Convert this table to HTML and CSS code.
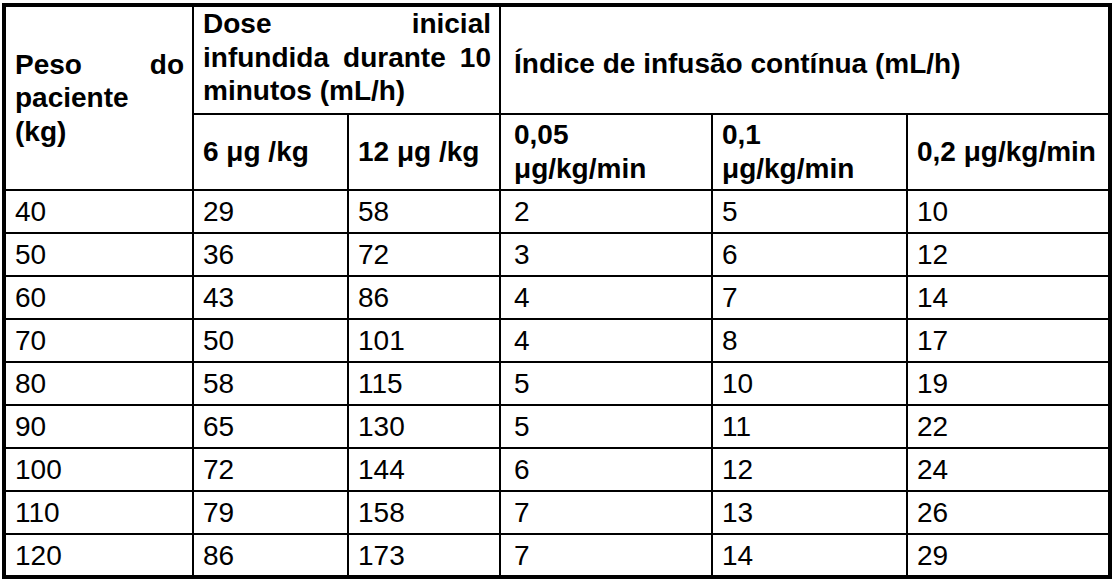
FILE: index.html
```html
<!DOCTYPE html>
<html lang="pt">
<head>
<meta charset="utf-8">
<title>Tabela de infusão</title>
<link rel="stylesheet" href="styles.css">
</head>
<body>
<table class="dose-table">
  <colgroup>
    <col class="c1">
    <col class="c2">
    <col class="c3">
    <col class="c4">
    <col class="c5">
    <col class="c6">
  </colgroup>
  <thead>
    <tr class="h1">
      <th rowspan="2" class="hd"><span class="jl">Peso do</span><span class="ln">paciente</span><span class="ln">(kg)</span></th>
      <th colspan="2" class="hd dose"><span class="jl">Dose inicial</span><span class="jl">infundida durante 10</span><span class="ln">minutos (mL/h)</span></th>
      <th colspan="3" class="hd idx wide">Índice de infusão contínua (mL/h)</th>
    </tr>
    <tr class="h2">
      <th class="hd">6 μg /kg</th>
      <th class="hd">12 μg /kg</th>
      <th class="hd wide">0,05<br>μg/kg/min</th>
      <th class="hd">0,1<br>μg/kg/min</th>
      <th class="hd">0,2 μg/kg/min</th>
    </tr>
  </thead>
  <tbody>
    <tr><td>40</td><td>29</td><td>58</td><td class="wide">2</td><td>5</td><td>10</td></tr>
    <tr><td>50</td><td>36</td><td>72</td><td class="wide">3</td><td>6</td><td>12</td></tr>
    <tr><td>60</td><td>43</td><td>86</td><td class="wide">4</td><td>7</td><td>14</td></tr>
    <tr><td>70</td><td>50</td><td>101</td><td class="wide">4</td><td>8</td><td>17</td></tr>
    <tr><td>80</td><td>58</td><td>115</td><td class="wide">5</td><td>10</td><td>19</td></tr>
    <tr><td>90</td><td>65</td><td>130</td><td class="wide">5</td><td>11</td><td>22</td></tr>
    <tr><td>100</td><td>72</td><td>144</td><td class="wide">6</td><td>12</td><td>24</td></tr>
    <tr><td>110</td><td>79</td><td>158</td><td class="wide">7</td><td>13</td><td>26</td></tr>
    <tr><td>120</td><td>86</td><td>173</td><td class="wide">7</td><td>14</td><td>29</td></tr>
  </tbody>
</table>
</body>
</html>
```
FILE: styles.css
```css
html, body {
  margin: 0;
  padding: 0;
  background: #ffffff;
}
body {
  padding: 3px 0 0 2px;
  font-family: "Liberation Sans", Arial, sans-serif;
  color: #000;
}
.dose-table {
  border-collapse: collapse;
  table-layout: fixed;
  width: 1110px;
  border: 4px solid #000;
  font-size: 28px;
  line-height: 33.5px;
}
.c1 { width: 189px; }
.c2 { width: 155px; }
.c3 { width: 152px; }
.c4 { width: 212px; }
.c5 { width: 195px; }
.c6 { width: 203px; }
.dose-table th,
.dose-table td {
  border: 2px solid #000;
  padding: 0 8px 0 9px;
  vertical-align: middle;
  text-align: left;
}
.dose-table td {
  padding-top: 2px;
}
.dose-table th {
  font-weight: bold;
}
.dose-table .wide {
  padding-left: 13px;
}
.dose-table .dose {
  padding-bottom: 5px;
}
.dose-table .idx {
  padding-top: 7px;
}
.h1 { height: 108px; }
.h2 { height: 76px; }
.dose-table tbody tr { height: 43px; }
.jl {
  display: block;
  text-align: justify;
  text-align-last: justify;
}
.ln { display: block; }
```
